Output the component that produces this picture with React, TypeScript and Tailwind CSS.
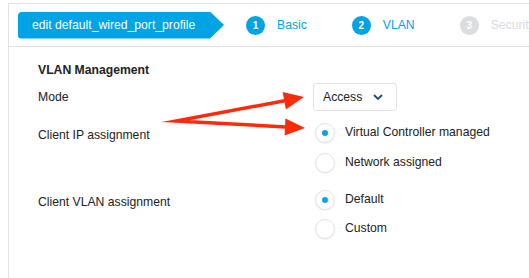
import React from 'react';

function Step({ n, label, active }: { n: number; label: string; active: boolean }) {
  return (
    <div className="flex items-center gap-[12px] shrink-0">
      <div
        className={`w-[19px] h-[19px] rounded-full flex items-center justify-center text-[10px] font-bold text-white ${
          active ? 'bg-[#00a4e4]' : 'bg-[#dcdde0]'
        }`}
      >
        {n}
      </div>
      <span className={`text-[12.2px] ${active ? 'text-[#00a4e4]' : 'text-[#d9dadd]'}`}>{label}</span>
    </div>
  );
}

function Radio({ label, checked }: { label: string; checked?: boolean }) {
  return (
    <div className="flex items-center gap-[10px] h-[20px]">
      <div className="w-[20px] h-[20px] rounded-full border border-[#e3e3e3] shadow-[0_1px_1px_rgba(0,0,0,0.06)] flex items-center justify-center bg-white">
        {checked && <div className="w-[6px] h-[6px] rounded-full bg-[#0aa3e8]" />}
      </div>
      <span className="mb-[2px]">{label}</span>
    </div>
  );
}

export default function App() {
  return (
    <div
      className="relative w-[529px] h-[278px] bg-white overflow-hidden text-[12.2px] text-[#222]"
      style={{ fontFamily: '"Liberation Sans", Arial, sans-serif' }}
    >
      <div className="ml-[8px] mt-[3px] h-[275px] border-l border-t border-[#e2e2e2]">
        {/* Wizard header */}
        <div className="h-[43px] border-b border-[#e2e2e2] flex items-center pl-[9px] overflow-hidden">
          <div className="shrink-0 w-[206px] h-[27px] rounded-l-[4px] bg-[#00a4e4] text-white flex items-center pl-[14px] [clip-path:polygon(0_0,192px_0,100%_50%,192px_100%,0_100%)]">
            edit default_wired_port_profile
          </div>
          <div className="flex items-center gap-[45px] ml-[22px] whitespace-nowrap shrink-0">
            <Step n={1} label="Basic" active />
            <Step n={2} label="VLAN" active />
            <Step n={3} label="Security" active={false} />
          </div>
        </div>

        {/* Form */}
        <div className="pl-[29px] pt-[15px]">
          <div className="font-bold leading-[16px]">VLAN Management</div>

          <div className="flex items-center mt-[5px]">
            <div className="w-[275px]">Mode</div>
            <div className="w-[84px] h-[28px] border border-[#e2e2e2] rounded-[3px] flex items-center pl-[9px]">
              <span>Access</span>
              <svg className="ml-[11px]" width="10" height="7" viewBox="0 0 10 7">
                <polyline points="1,1 5,5 9,1" fill="none" stroke="#1d4b78" strokeWidth="1.8" />
              </svg>
            </div>
          </div>

          <div className="flex mt-[12px]">
            <div className="w-[277px] leading-[20px] pt-[2px]">Client IP assignment</div>
            <div className="flex flex-col gap-[10px]">
              <Radio label="Virtual Controller managed" checked />
              <Radio label="Network assigned" />
            </div>
          </div>

          <div className="flex mt-[17px]">
            <div className="w-[277px] leading-[20px] pt-[2px]">Client VLAN assignment</div>
            <div className="flex flex-col gap-[9px]">
              <Radio label="Default" checked />
              <Radio label="Custom" />
            </div>
          </div>
        </div>
      </div>

      {/* Annotation arrows */}
      <svg className="absolute inset-0 pointer-events-none" width="529" height="278" viewBox="0 0 529 278">
        <polyline
          points="286,100.5 176,121 286,127"
          fill="none"
          stroke="#ff2a0a"
          strokeWidth="3.5"
          strokeLinejoin="miter"
          strokeMiterlimit="20"
        />
        <polygon points="304,97 285.9,109.5 282.6,91.9" fill="#ff2a0a" />
        <polygon points="305,128 284.6,135.5 285.4,118.5" fill="#ff2a0a" />
      </svg>
    </div>
  );
}
